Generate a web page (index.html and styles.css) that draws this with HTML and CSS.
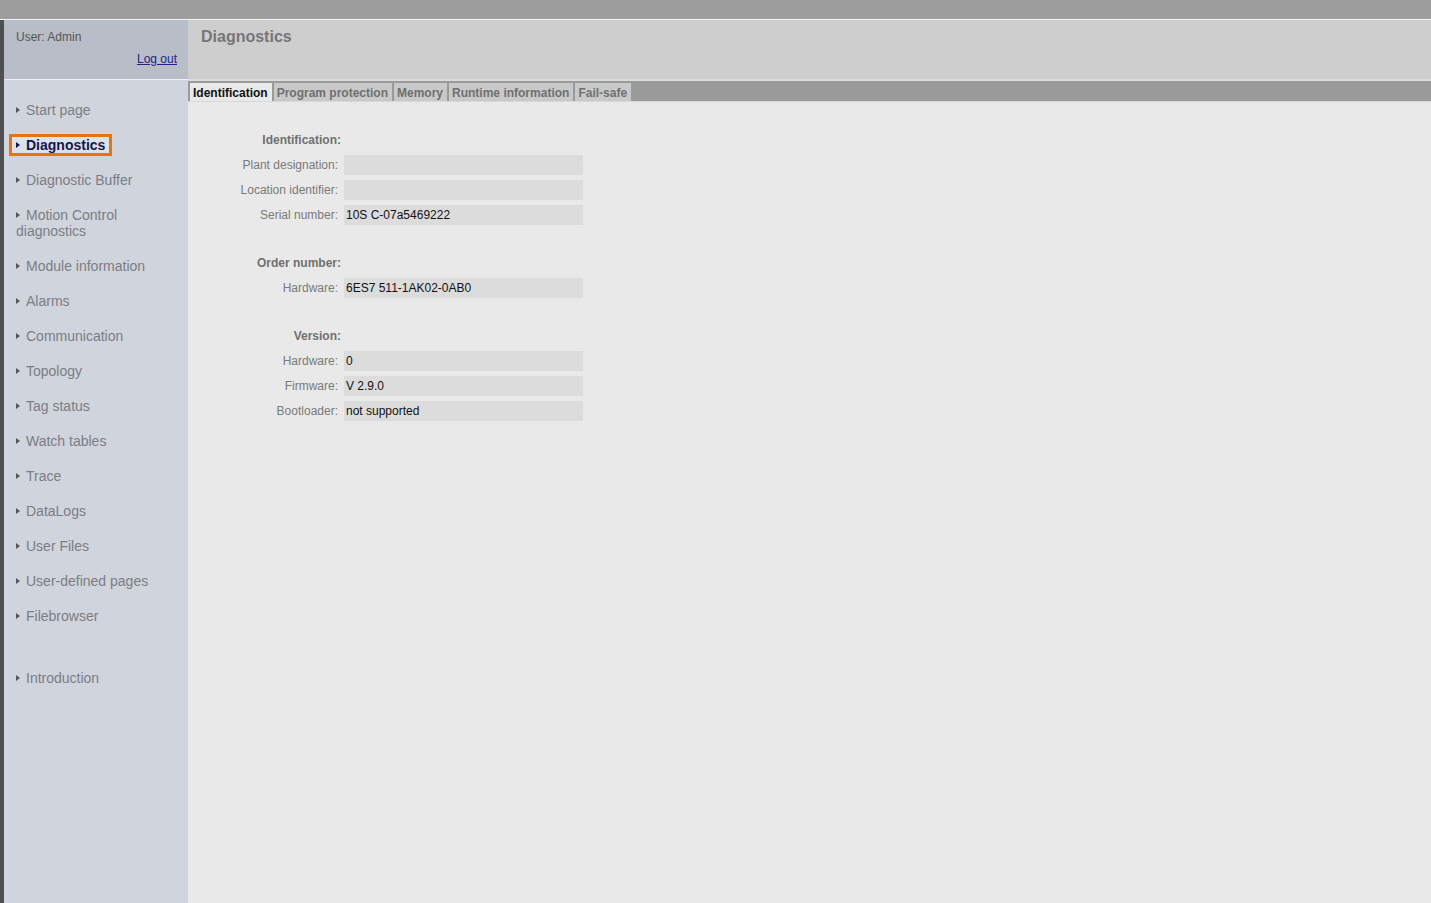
FILE: index.html
```html
<!DOCTYPE html>
<html lang="en">
<head>
    <meta charset="UTF-8">
    <title>Diagnostics</title>
    <link rel="stylesheet" href="styles.css">
</head>
<body>
    <div class="topbar"></div>
    <div class="page">
        <div class="edge"></div>
        <aside class="sidebar">
            <div class="user-box">
                <div class="user">User: Admin</div>
                <a class="logout" href="#">Log out</a>
            </div>
            <ul class="nav">
                <li><a href="#">Start page</a></li>
                <li class="active"><a href="#">Diagnostics</a></li>
                <li><a href="#">Diagnostic Buffer</a></li>
                <li><a href="#">Motion Control diagnostics</a></li>
                <li><a href="#">Module information</a></li>
                <li><a href="#">Alarms</a></li>
                <li><a href="#">Communication</a></li>
                <li><a href="#">Topology</a></li>
                <li><a href="#">Tag status</a></li>
                <li><a href="#">Watch tables</a></li>
                <li><a href="#">Trace</a></li>
                <li><a href="#">DataLogs</a></li>
                <li><a href="#">User Files</a></li>
                <li><a href="#">User-defined pages</a></li>
                <li><a href="#">Filebrowser</a></li>
                <li class="spaced"><a href="#">Introduction</a></li>
            </ul>
        </aside>
        <main class="main">
            <div class="header">
                <h1>Diagnostics</h1>
            </div>
            <div class="tabs">
                <span class="tab active">Identification</span>
                <span class="tab">Program protection</span>
                <span class="tab">Memory</span>
                <span class="tab">Runtime information</span>
                <span class="tab">Fail-safe</span>
            </div>
            <div class="content">
                <div class="section">
                    <div class="section-title">Identification:</div>
                    <div class="row"><span class="label">Plant designation:</span><span class="value"></span></div>
                    <div class="row"><span class="label">Location identifier:</span><span class="value"></span></div>
                    <div class="row"><span class="label">Serial number:</span><span class="value">10S C-07a5469222</span></div>
                </div>
                <div class="section">
                    <div class="section-title">Order number:</div>
                    <div class="row"><span class="label">Hardware:</span><span class="value">6ES7 511-1AK02-0AB0</span></div>
                </div>
                <div class="section">
                    <div class="section-title">Version:</div>
                    <div class="row"><span class="label">Hardware:</span><span class="value">0</span></div>
                    <div class="row"><span class="label">Firmware:</span><span class="value">V 2.9.0</span></div>
                    <div class="row"><span class="label">Bootloader:</span><span class="value">not supported</span></div>
                </div>
            </div>
        </main>
    </div>
</body>
</html>
```

FILE: styles.css
```css
html, body {
    height: 100%;
}

body {
    margin: 0;
    font-family: 'Liberation Sans', Arial, sans-serif;
    background-color: #e9e9e9;
    display: flex;
    flex-direction: column;
    overflow: hidden;
}

.topbar {
    height: 19px;
    background-color: #9d9d9d;
    border-bottom: 1px solid #f4f4f4;
    flex-shrink: 0;
}

.page {
    flex: 1;
    display: flex;
}

.edge {
    width: 4px;
    background-color: #4f4f4f;
}

/* sidebar */

.sidebar {
    width: 184px;
    background-color: #d0d4dc;
    display: flex;
    flex-direction: column;
}

.user-box {
    height: 59px;
    background-color: #b9bdc7;
    border-bottom: 1px solid #eef0f4;
    padding: 0 11px 0 12px;
    font-size: 12px;
    display: flex;
    flex-direction: column;
}

.user {
    color: #555;
    margin-top: 10px;
}

.logout {
    align-self: flex-end;
    color: #22228a;
    margin-top: 8px;
}

.nav {
    list-style: none;
    margin: 0;
    padding: 22px 0 0 12px;
}

.nav li {
    font-size: 14px;
    line-height: 16px;
    margin-bottom: 19px;
    width: 150px;
}

.nav li a {
    color: #7b7d85;
    text-decoration: none;
}

.nav li a::before {
    content: "";
    display: inline-block;
    width: 0;
    height: 0;
    border-top: 3px solid transparent;
    border-bottom: 3px solid transparent;
    border-left: 4px solid #555;
    margin: 0 6px 2px 0;
}

.nav li.active {
    margin: -3px 0 16px -7px;
    width: auto;
}

.nav li.active a {
    display: inline-block;
    border: 3px solid #e8730f;
    background-color: #dde1e8;
    padding: 0 4px 0 4px;
    line-height: 16px;
    color: #15154f;
    font-weight: bold;
}

.nav li.active a::before {
    border-left-color: #15154f;
}

.nav li.spaced {
    margin-top: 46px;
}

/* main */

.main {
    flex: 1;
    display: flex;
    flex-direction: column;
}

.header {
    height: 59px;
    background-color: #cecece;
    border-bottom: 2px solid #dcdcdc;
    padding: 0 13px;
}

.header h1 {
    margin: 8px 0 0;
    font-size: 16px;
    color: #767676;
}

.tabs {
    height: 18px;
    background-color: #9a9a9a;
    border-bottom: 1px solid #d8d8d8;
    padding: 2px 0 0 2px;
    display: flex;
    gap: 2px;
}

.tab {
    font-size: 12px;
    font-weight: bold;
    line-height: 18px;
    padding: 1px 4px 0 3px;
    background-color: #c9c9c9;
    color: #707070;
}

.tab.active {
    background-color: #e9e9e9;
    color: #111;
}

.content {
    padding-top: 28px;
}

.section {
    margin-bottom: 28px;
}

.section-title {
    width: 153px;
    text-align: right;
    font-size: 12px;
    font-weight: bold;
    color: #707070;
    line-height: 20px;
    margin-bottom: 5px;
}

.row {
    display: flex;
    align-items: center;
    margin-bottom: 5px;
    font-size: 12px;
}

.label {
    width: 150px;
    text-align: right;
    color: #7a7a7a;
    padding-right: 6px;
}

.value {
    width: 237px;
    height: 20px;
    line-height: 20px;
    background-color: #dcdcdc;
    color: #111;
    padding-left: 2px;
}
```
